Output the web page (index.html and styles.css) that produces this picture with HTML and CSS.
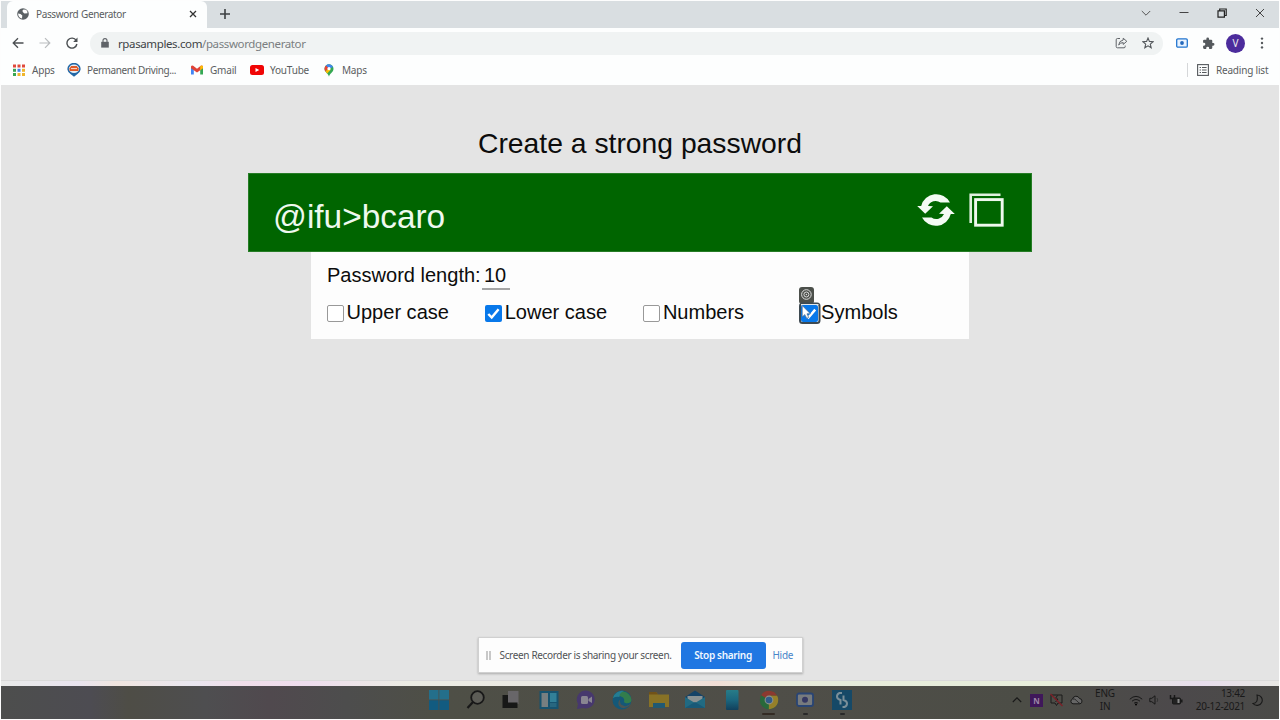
FILE: index.html
```html
<!DOCTYPE html>
<html lang="en">
<head>
<meta charset="utf-8">
<title>Password Generator</title>
<link rel="stylesheet" href="styles.css">
</head>
<body>
<div class="screen">
  <header class="tabstrip">
    <div class="tab">
      <svg class="tab-icon" width="12" height="12" viewBox="0 0 12 12"><circle cx="6" cy="6" r="5.8" fill="#5b6165"/><path d="M6.600 1.500Q4.800 2.300 5.600 3.600T7.500 5.500L10.500 5.200Q10.800 3 9 1.800Z" fill="#fff"/><path d="M1 5.500 3.500 6 5.300 7.500 5 10.500Q1.500 10 1 5.500Z" fill="#fff"/></svg>
      <span class="tab-title">Password Generator</span>
      <svg class="tab-close" width="8" height="8" viewBox="0 0 8 8"><path d="M1 1 7 7M7 1 1 7" stroke="#333" stroke-width="1.3"/></svg>
    </div>
    <svg class="tab-new" width="12" height="12" viewBox="0 0 12 12"><path d="M6 1V11M1 6H11" stroke="#3c4043" stroke-width="1.6"/></svg>
    <div class="window-buttons">
      <svg width="10" height="10" viewBox="0 0 10 10"><path d="M.8 3 5 7.2 9.2 3" fill="none" stroke="#555" /></svg>
      <svg width="10" height="10" viewBox="0 0 10 10"><path d="M.5 4.500H9.500" stroke="#444"/></svg>
      <svg width="10" height="10" viewBox="0 0 10 10"><path d="M1 2.8H7.4V9.2H1ZM2.7 2.8V1H9.2V7.5H7.4" fill="none" stroke="#222" stroke-width="1.2"/></svg>
      <svg width="10" height="10" viewBox="0 0 10 10"><path d="M1 1 9 9M9 1 1 9" stroke="#444"/></svg>
    </div>
  </header>

  <div class="toolbar">
    <svg width="12" height="12" viewBox="0 0 12 12"><path d="M11.5 6H1.5M6 1.2 1.2 6 6 10.8" fill="none" stroke="#4b4f52" stroke-width="1.3"/></svg>
    <svg width="12" height="12" viewBox="0 0 12 12"><path d="M.5 6H10.5M6 1.2 10.8 6 6 10.8" fill="none" stroke="#b9bcbe" stroke-width="1.2"/></svg>
    <svg width="12" height="12" viewBox="0 0 12 12"><path d="M10.2 3.4A5 5 0 1 0 10.9 7" fill="none" stroke="#4b4f52" stroke-width="1.4"/><path d="M11.5.6V5H7.2Z" fill="#4b4f52"/></svg>
    <div class="address">
      <svg class="lock" width="8" height="10" viewBox="0 0 8 10"><path d="M.2 3.8H7.8V9.6H.2Z" fill="#5f6368"/><path d="M2 4V2.6A2 2 0 0 1 6 2.6V4" fill="none" stroke="#5f6368" stroke-width="1.1"/></svg>
      <span class="url"><span class="url-host">rpasamples.com</span>/passwordgenerator</span>
      <svg class="share" width="13" height="12" viewBox="0 0 13 12"><path d="M5 1.5H2.4Q1.2 1.5 1.2 2.8V9.6Q1.2 10.8 2.4 10.8H9Q10.2 10.8 10.2 9.6V8.6" fill="none" stroke="#5f6368"/><path d="M8.2 1.2 11.8 4.3 8.2 7.4V5.6Q5.2 5.6 3.7 8Q4.1 3.7 8.2 3Z" fill="none" stroke="#5f6368" stroke-linejoin="round"/></svg>
      <svg class="star" width="12" height="12" viewBox="0 0 12 12"><path d="M6 1 7.4 4.4 11.1 4.7 8.3 7.1 9.2 10.8 6 8.8 2.8 10.8 3.7 7.1 .9 4.7 4.6 4.4Z" fill="none" stroke="#55595d" stroke-width="1.1"/></svg>
    </div>
    <svg class="ext-record" width="12" height="10" viewBox="0 0 12 10"><rect x=".7" y=".8" width="10.6" height="8.4" rx="1.2" fill="#e9f3ff" stroke="#2376cf" stroke-width="1.3"/><circle cx="6" cy="5" r="1.9" fill="#2468bb"/></svg>
    <svg class="ext-puzzle" width="13" height="13" viewBox="0 0 24 24"><path d="M20.5 11H19V7a2 2 0 0 0-2-2h-4V3.500a2.500 2.500 0 0 0-5 0V5H4a2 2 0 0 0-2 2v3.800h1.500a2.700 2.700 0 0 1 0 5.400H2V20a2 2 0 0 0 2 2h3.800v-1.500a2.700 2.700 0 0 1 5.400 0V22H17a2 2 0 0 0 2-2v-4h1.500a2.500 2.500 0 0 0 0-5z" fill="#55595d"/></svg>
    <span class="avatar">V</span>
    <svg class="menu-dots" width="4" height="12" viewBox="0 0 4 12"><g fill="#55595d"><circle cx="2" cy="1.6" r="1.2"/><circle cx="2" cy="6" r="1.2"/><circle cx="2" cy="10.400" r="1.2"/></g></svg>
  </div>

  <nav class="bookmarks">
    <svg class="bm-apps" width="12" height="12" viewBox="0 0 12 12"><path d="M0 .5h3v3H0zM4.500.5h3v3h-3zM9 .5h3v3H9z" fill="#e0493c"/><path d="M0 4.800h3v3H0z" fill="#37a653"/><path d="M4.500 4.800h3v3h-3z" fill="#4280e8"/><path d="M9 4.800h3v3H9z" fill="#efb52c"/><path d="M0 9h3v3H0z" fill="#37a653"/><path d="M4.500 9h3v3h-3zM9 9h3v3H9z" fill="#efb52c"/></svg>
    <span class="t-apps">Apps</span>
    <svg class="bm-drive" width="14" height="14" viewBox="0 0 14 14"><path d="M7 13.700 3.500 10.900A6.600 6 0 1 1 10.500 10.900Z" fill="#2267a5"/><ellipse cx="7" cy="5.800" rx="5.200" ry="4.300" fill="#e6eef4"/><path d="M2.500 7.900V5.300L4.200 3H9.800L11.500 5.300V7.900Z" fill="#df5a26"/><path d="M4 5.600H10" stroke="#fff" stroke-width=".8"/></svg>
    <span class="t-drive">Permanent Driving...</span>
    <svg class="bm-gmail" width="12" height="10" viewBox="0 0 12 10"><path d="M0 1.500V9.500H2.800V4.500Z" fill="#4285f4"/><path d="M12 1.500V9.500H9.200V4.500Z" fill="#34a853"/><path d="M0 1.500Q.6 0 2.200.8L6 3.700 9.800.8Q11.400 0 12 1.500V3.200L6 7.500 0 3.200Z" fill="#e04236"/><path d="M9.200 1.300 9.800.8Q11.400 0 12 1.500V3.200L9.200 5.200Z" fill="#fbbc04"/></svg>
    <span class="t-gmail">Gmail</span>
    <svg class="bm-yt" width="14" height="10" viewBox="0 0 14 10"><rect width="14" height="10" rx="2.500" fill="#f00505"/><path d="M5.500 2.900 9.300 5 5.500 7.100Z" fill="#fff"/></svg>
    <span class="t-yt">YouTube</span>
    <svg class="bm-maps" width="10" height="13" viewBox="0 0 10 13"><path d="M5 12.800C4.700 9.500.5 8.500.5 4.700A4.500 4.500 0 0 1 9.500 4.700C9.500 8.500 5.300 9.500 5 12.800Z" fill="#34a853"/><path d="M.5 4.700A4.500 4.500 0 0 1 2 1.400L4.800 3.800 1.500 7.500Q.5 6.300.5 4.700Z" fill="#ea4335"/><path d="M2 1.400A4.500 4.500 0 0 1 9.100 3L5 4.500Z" fill="#4285f4"/><path d="M1.500 7.500 5 3.800 6.500 6 3.200 9.600Z" fill="#fbbc04"/><circle cx="5" cy="4.700" r="1.600" fill="#fff"/></svg>
    <span class="t-maps">Maps</span>
    <span class="bm-divider"></span>
    <svg class="bm-list" width="12" height="12" viewBox="0 0 12 12"><rect x=".6" y=".6" width="10.800" height="10.800" fill="none" stroke="#55595d" stroke-width="1.100"/><path d="M2.600 3.500H4M5 3.500H9.600M2.600 6H4M5 6H9.600M2.600 8.500H4M5 8.500H9.600" stroke="#55595d" stroke-width="1"/></svg>
    <span class="t-list">Reading list</span>
  </nav>

  <main class="page">
    <h1 class="heading">Create a strong password</h1>
    <section class="result">
      <span class="password">@ifu&gt;bcaro</span>
      <svg class="refresh" width="38" height="34" viewBox="0 0 38 34"><g fill="#f4fbf4"><path d="M4.200 13A15.500 15.500 0 0 1 33 9.500H23.500A8.300 8.300 0 0 0 11 13L16 13.200 8.200 20.800.2 13Z"/><path d="M33.800 21A15.500 15.500 0 0 1 5 24.500H14.500A8.300 8.300 0 0 0 27 21L22 20.800 29.800 13.200 37.800 21Z"/></g></svg>
      <svg class="copy" width="35" height="34" viewBox="0 0 35 34"><path d="M1.700 30V1.700H31.500" fill="none" stroke="#e0f0df" stroke-width="2.600"/><rect x="6.600" y="6.600" width="26.600" height="25.600" fill="none" stroke="#eff8ee" stroke-width="2.900"/></svg>
    </section>
    <section class="options">
      <div class="length"><span class="length-label">Password length:</span><span class="length-value">10</span></div>
      <div class="checks">
        <div class="check"><span class="box"></span><span>Upper case</span></div>
        <div class="check"><span class="box on"><svg width="17" height="17" viewBox="0 0 17 17"><path d="M3.300 9 6.700 12.500 13.600 4.200" fill="none" stroke="#fff" stroke-width="2.500"/></svg></span><span>Lower case</span></div>
        <div class="check"><span class="box"></span><span>Numbers</span></div>
        <div class="check symbols"><span class="box on"><svg width="17" height="17" viewBox="0 0 17 17"><path d="M4 9 7.500 12.500 14.200 4.600" fill="none" stroke="#fff" stroke-width="2.400"/></svg></span><span>Symbols</span>
          <svg class="picker" width="24" height="40" viewBox="0 0 24 40"><rect x="1" y="1" width="15" height="17" rx="3" fill="#4c504b"/><rect x="2" y="17.500" width="19.500" height="19.500" rx="2.500" fill="none" stroke="#3e4a52" stroke-width="2"/><path d="M3 18.500H20.500" stroke="#e2e8eb" stroke-width="1"/><circle cx="8.400" cy="8.500" r="4.800" fill="none" stroke="#ddd"/><circle cx="8.400" cy="8.500" r="2.500" fill="none" stroke="#ddd"/><circle cx="8.400" cy="8.500" r=".8" fill="#ddd"/><path d="M4.200 19.500V31L6.900 28.600 8.700 32.400 10.700 31.500 9 27.800H12.400Z" fill="#fff" stroke="#426486" stroke-width=".7"/></svg>
        </div>
      </div>
    </section>
    <aside class="sharing">
      <span class="grip"></span>
      <span class="sharing-text">Screen Recorder is sharing your screen.</span>
      <span class="stop">Stop sharing</span>
      <span class="hide">Hide</span>
    </aside>
  </main>

  <div class="wallpaper"></div>
  <footer class="taskbar">
    <div class="apps">
      <svg width="20" height="20" viewBox="0 0 20 20"><path d="M0 0H9.500V9.500H0ZM10.300 0H20V9.500H10.300Z" fill="#246f8b"/><path d="M0 10.300H9.500V20H0ZM10.300 10.300H20V20H10.300Z" fill="#125b80"/></svg>
      <svg width="20" height="20" viewBox="0 0 20 20"><circle cx="11.500" cy="7.500" r="6.300" fill="#5c5c56" stroke="#181818" stroke-width="1.800"/><path d="M7 12 1.500 18" stroke="#181818" stroke-width="2.200"/></svg>
      <svg width="20" height="20" viewBox="0 0 20 20"><path d="M6 1H16.500V14H6Z" fill="#686669"/><path d="M.5 5H6V12.500H15.500V18H.5Z" fill="#171817"/></svg>
      <svg width="20" height="20" viewBox="0 0 20 20"><rect x=".5" y="1" width="19" height="18" fill="#17536f"/><path d="M2.500 3H9V17H2.500Z" fill="#777f81"/><path d="M11 3H17.500V12H11Z" fill="#328098"/><path d="M11 13H17.500V17H11Z" fill="#286780"/></svg>
      <svg width="20" height="20" viewBox="0 0 20 20"><path d="M1 19 2 14A9 9 0 1 1 7 18Z" fill="#47386d"/><rect x="5" y="6" width="7" height="8" rx="1.500" fill="#898591"/><path d="M12.500 9 16 6.500V13L12.500 11Z" fill="#898591"/></svg>
      <svg width="20" height="20" viewBox="0 0 20 20"><circle cx="10" cy="10" r="9.500" fill="#145878"/><path d="M1 8A9.500 9.500 0 0 1 19.500 10C19.500 14 13 14 12 12 14 6 5 4 1 8Z" fill="#327d4c"/><path d="M1 8A9.500 9.500 0 0 1 12 1Q7 3 7.500 7 4 6 1 8Z" fill="#247d93"/><path d="M19 13Q15 18 10 15 7 13 8.500 9 5 12 7 16 12 21 18 15Z" fill="#4a5555"/></svg>
      <svg width="20" height="20" viewBox="0 0 20 20"><path d="M0 2H7L9 4.500H20V17H0Z" fill="#887226"/><path d="M0 2H7L9 4.500H0Z" fill="#715218"/><path d="M4 13H16V18H4Z" fill="#205973"/></svg>
      <svg width="20" height="20" viewBox="0 0 20 20"><path d="M0 7 10 .5 20 7V18H0Z" fill="#164367"/><path d="M2.500 6H17.500V12L10 15 2.500 12Z" fill="#8a9192"/><path d="M0 7 10 13 20 7V18H0Z" fill="#216a82"/><path d="M0 18 10 12 20 18Z" fill="#185977"/></svg>
      <svg width="20" height="20" viewBox="0 0 20 20"><defs><linearGradient id="phone" x1="0" y1="0" x2="0" y2="1"><stop offset="0" stop-color="#287c88"/><stop offset=".5" stop-color="#1b667e"/><stop offset="1" stop-color="#11405c"/></linearGradient></defs><rect x="4" width="12.500" height="20" rx="1" fill="url(#phone)"/></svg>
      <div class="app wide"><svg width="20" height="20" viewBox="0 0 20 20"><circle cx="10" cy="10" r="9.200" fill="#28693b"/><path d="M10 10 2.100 5.200A9.200 9.200 0 0 1 18.200 5.800H10Z" fill="#8b3930"/><path d="M10 10V5.800H18.200A9.200 9.200 0 0 1 9.800 19.200Z" fill="#96802a"/><circle cx="10" cy="10" r="4.400" fill="#8c918b"/><circle cx="10" cy="10" r="3.300" fill="#315b88"/></svg></div>
      <div class="app"><svg width="20" height="20" viewBox="0 0 20 20"><rect x="2" y="3.500" width="16" height="12.500" rx="2" fill="#777b7e" stroke="#294575" stroke-width="1.800"/><circle cx="10" cy="9.800" r="3" fill="#353863"/></svg></div>
      <div class="app"><svg width="20" height="20" viewBox="0 0 20 20"><rect width="20" height="20" fill="#164967"/><path d="M10 3H7.500Q5 4 5 6.500T8.500 10V14.500M10.500 17H12.500Q15 16 15 13.500T11.500 10V5.500" fill="none" stroke="#7b8f99" stroke-width="2"/></svg></div>
    </div>
    <div class="tray">
      <svg class="tr-up" width="10" height="8" viewBox="0 0 10 8"><path d="M.8 6 5 1.800 9.200 6" fill="none" stroke="#191919" stroke-width="1.100"/></svg>
      <span class="onenote">N</span>
      <svg class="tr-flag" width="13" height="14" viewBox="0 0 13 14"><path d="M1 2H12V10H8L6.500 12.500 5 10H1ZM7.500 2.500 5 6H8L5.500 9" fill="none" stroke="#1a1a1a"/><path d="M.5 1 12.500 13" stroke="#7b2028" stroke-width="1.400"/></svg>
      <svg class="tr-cloud" width="13" height="10" viewBox="0 0 13 10"><path d="M3 8.800A2.500 2.500 0 0 1 2.500 4 3.700 3.700 0 0 1 9.500 3.500 2.700 2.700 0 0 1 10 8.800Z" fill="#666" stroke="#191919"/><path d="M2.500 4Q5 3.500 6.500 5.500T10 8.500" fill="none" stroke="#292929"/></svg>
      <span class="lang">ENG<br>IN</span>
      <svg class="tr-wifi" width="14" height="11" viewBox="0 0 14 11"><g fill="none" stroke="#181818"><path d="M.8 4.200Q7-1.500 13.200 4.200M3 6.200Q7 2.800 11 6.200M5 8.200Q7 6.400 9 8.200"/></g><circle cx="7" cy="9.500" r="1"/></svg>
      <svg class="tr-sound" width="12" height="10" viewBox="0 0 12 10"><path d="M.8 3.300H2.800L6 .8V9.200L2.800 6.700H.8Z" fill="none" stroke="#181818"/><path d="M8 3Q9.500 5 8 7" fill="none" stroke="#333"/></svg>
      <svg class="tr-batt" width="14" height="11" viewBox="0 0 14 11"><rect x="3.500" y="3" width="8" height="6" rx="1" fill="#222" stroke="#181818"/><path d="M12.800 4.500V7.500M1.500 0V3.500H5.500V0" fill="none" stroke="#181818" stroke-width="1.500"/><path d="M8.500 4H10.500V8H8.500Z" fill="#888"/></svg>
      <span class="clock">13:42<br>20-12-2021</span>
      <svg class="tr-moon" width="12" height="13" viewBox="0 0 12 13"><path d="M5 1A5.200 5.200 0 1 1 1 9.500Q6.500 9.500 5 1Z" fill="none" stroke="#191919" stroke-width="1.100"/></svg>
    </div>
  </footer>
</div>
</body>
</html>
```
FILE: styles.css
```css
* { box-sizing: border-box; }
body { margin: 0; background: #fdfdfd; font-family: "Noto Sans", sans-serif; }
svg { display: block; flex: none; }
span { white-space: nowrap; }
.screen { width: 1280px; height: 720px; padding: 1px; display: flex; flex-direction: column; overflow: hidden; }

.tabstrip { height: 27px; flex: none; background: #d9dee1; display: flex; align-items: flex-start; }
.tab { width: 200px; height: 27px; margin-left: 6px; background: #fdfefe; border-radius: 6px 6px 0 0; display: flex; align-items: center; padding: 0 10px 2px; }
.tab-title { font-size: 10px; letter-spacing: -.37px; word-spacing: .5px; color: #5a5d60; margin-left: 7px; }
.tab-close { margin-left: auto; }
.tab-new { margin: 7px 0 0 12px; }
.window-buttons { margin-left: auto; display: flex; gap: 28px; padding: 7px 14px 0 0; }

.toolbar { height: 30px; flex: none; background: #fdfefe; display: flex; align-items: center; padding-left: 11px; }
.toolbar > svg + svg { margin-left: 15px; }
.address { width: 1073px; height: 23px; margin-left: 12px; background: #f0f3f3; border-radius: 12px; display: flex; align-items: center; padding: 0 9px 0 11px; }
.url { font-size: 11.500px; letter-spacing: -.38px; color: #7a7e81; margin-left: 9px; }
.url-host { color: #404346; }
.share { margin-left: auto; }
.star { margin-left: 14px; }
.ext-record { margin-left: 13px; }
.toolbar > .ext-puzzle { margin-left: 14px; }
.avatar { width: 19px; height: 19px; margin-left: 11px; border-radius: 50%; background: #4c2c9c; color: #eee; font-size: 10px; line-height: 19px; text-align: center; }
.menu-dots { margin-left: 15px; }

.bookmarks { height: 27px; flex: none; background: #fdfefe; display: flex; align-items: center; padding: 0 11px 3px 12px; font-size: 10px; letter-spacing: -.2px; color: #5a5d60; }
.t-apps { width: 23px; margin-left: 7px; }
.bm-drive { margin-left: 12px; }
.t-drive { width: 90px; margin-left: 6px; letter-spacing: -.4px; }
.bm-gmail { margin-left: 14px; }
.t-gmail { width: 26px; margin-left: 7px; }
.bm-yt { margin-left: 14px; }
.t-yt { width: 39px; margin-left: 6px; }
.bm-maps { margin-left: 15px; }
.t-maps { width: 25px; margin-left: 8px; }
.bm-divider { width: 1px; height: 14px; background: #d5d7d9; margin-left: auto; }
.bm-list { margin-left: 9px; }
.t-list { width: 52px; margin-left: 7px; }

.page { height: 596px; flex: none; background: #e4e4e4; display: flex; flex-direction: column; align-items: center; font-family: "Liberation Sans", Arial, sans-serif; color: #0c0c0c; border-bottom: 1px solid #dadada; }
.heading { margin: 41px 0 0; font-size: 28.300px; font-weight: 400; line-height: 34px; white-space: nowrap; }
.result { width: 784px; height: 79px; margin-top: 13px; background: #006500; border: 1px solid #267c26; display: flex; align-items: flex-start; padding: 19px 27px 0 24px; }
.password { font-size: 33.400px; line-height: 48px; color: #eff9ef; }
.refresh { margin-left: auto; }
.copy { margin-left: 14px; }
.options { width: 658px; height: 87px; background: #fdfdfd; padding: 8px 0 0 16px; font-size: 20.050px; }
.length { display: flex; height: 30px; line-height: 31px; }
.length-label { width: 153px; }
.length-value { width: 28px; height: 30px; line-height: 30px; margin-left: 2px; padding-left: 2px; border-bottom: 2px solid #a5a5a5; font-size: 20px; }
.checks { display: grid; grid-template-columns: 158.200px 158.200px 158.200px auto; margin-top: 9px; }
.check { display: flex; height: 26px; line-height: 27px; gap: 3px; position: relative; }
.box { width: 17px; height: 17px; margin-top: 6px; margin-left: -.5px; border: 1px solid #999; border-radius: 2px; background: #fff; }
.box.on { border: 0; background: #0878ea; }
.picker { position: absolute; left: -4px; top: -13px; }
.sharing { width: 325px; height: 36px; margin-top: auto; margin-bottom: 7px; background: #fdfdfd; border: 1px solid #d0d0d0; box-shadow: 0 1px 2px #aaa; display: flex; align-items: center; padding-left: 7px; font-family: "Noto Sans", sans-serif; font-size: 10px; color: #505356; }
.grip { width: 5px; height: 9px; border: 1px solid #c8c8c8; border-width: 0 2px; }
.sharing-text { width: 174px; margin-left: 9px; letter-spacing: -.34px; }
.stop { width: 85px; height: 27px; margin-left: 7px; line-height: 27px; text-align: center; background: #2077e2; color: #f1f7ff; border-radius: 3px; font-weight: 600; letter-spacing: -.32px; }
.hide { margin-left: 7px; color: #4885c9; letter-spacing: -.3px; }

.wallpaper { height: 5px; flex: none; background: linear-gradient(90deg, #e9eae9 0, #e9e4ef 6%, #f0e5df 9%, #e9e6ef 15%, #f1deea 19%, #eeddee 24%, #ebece3 32%, #ebe8e4 50%, #f1ded6 56%, #e7ebdb 60%, #e7eedb 82%, #e8deed 94%, #e8e8e4); }
.taskbar { height: 33px; flex: none; background: linear-gradient(90deg, #4d4e4d 0, #4d4c52 7%, #4e4d46 10%, #4e4e50 16%, #50494e 21%, #4d4d4d 27%, #4e4f46 34%, #4f4e48 60%, #4c4d46 80%, #4c494b 92%, #4b4b48); display: flex; padding-left: 428px; color: #191919; }
.apps { display: flex; gap: 16.650px; padding-top: 4px; }
.app { display: flex; flex-direction: column; align-items: center; }
.app::after { content: ""; width: 5px; height: 2px; margin-top: 3px; border-radius: 1px; background: #292929; }
.app.wide::after { width: 13px; background: #332b24; }
.tray { margin-left: auto; padding-right: 15px; display: flex; align-items: center; height: 28px; font-size: 10px; line-height: 13px; }
.onenote { width: 13px; height: 13px; margin-left: 8px; background: #3f175a; color: #9b85a5; font-weight: 700; font-size: 8px; text-align: center; }
.tr-flag { margin-left: 7px; }
.tr-cloud { margin-left: 7px; }
.lang { width: 22px; margin-left: 11px; text-align: center; letter-spacing: -.2px; }
.tr-wifi { margin-left: 13px; }
.tr-sound { margin-left: 6px; }
.tr-batt { margin-left: 8px; }
.clock { width: 50px; margin-left: 12px; text-align: right; letter-spacing: -.3px; }
.tr-moon { margin-left: 7px; }
```
